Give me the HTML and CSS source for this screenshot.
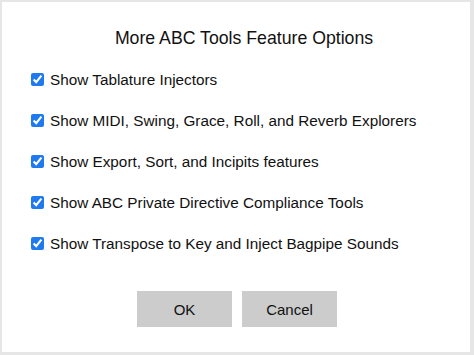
FILE: index.html
```html
<!DOCTYPE html>
<html>
<head>
<meta charset="utf-8">
<link rel="stylesheet" href="styles.css">
</head>
<body>
<div class="dialog">
  <div class="title">More ABC Tools Feature Options</div>
  <div class="options">
    <label class="row"><input type="checkbox" checked><span>Show Tablature Injectors</span></label>
    <label class="row"><input type="checkbox" checked><span>Show MIDI, Swing, Grace, Roll, and Reverb Explorers</span></label>
    <label class="row"><input type="checkbox" checked><span>Show Export, Sort, and Incipits features</span></label>
    <label class="row"><input type="checkbox" checked><span>Show ABC Private Directive Compliance Tools</span></label>
    <label class="row"><input type="checkbox" checked><span>Show Transpose to Key and Inject Bagpipe Sounds</span></label>
  </div>
  <div class="buttons">
    <button class="btn">OK</button>
    <button class="btn">Cancel</button>
  </div>
</div>
</body>
</html>
```
FILE: styles.css
```css
html, body {
  margin: 0;
  padding: 0;
}
body {
  background: #e6e6e6;
  width: 474px;
  height: 355px;
  padding: 2px 4px 3px 2px;
  box-sizing: border-box;
  font-family: "Liberation Sans", Arial, sans-serif;
  color: #111;
}
.dialog {
  background: #fff;
  height: 350px;
  box-sizing: border-box;
  padding-top: 25px;
}
.title {
  font-size: 17.7px;
  line-height: 22px;
  text-align: center;
  padding-left: 16px;
}
.options {
  margin-top: 10px;
  padding-left: 29px;
}
.row {
  display: flex;
  align-items: center;
  height: 41px;
  font-size: 15.3px;
  gap: 6px;
}
.row input {
  margin: 0;
  width: 13px;
  height: 13px;
  accent-color: #1f7af0;
}
.buttons {
  display: flex;
  justify-content: center;
  gap: 10px;
  margin-top: 27px;
  padding-left: 2px;
}
.btn {
  width: 95px;
  height: 36px;
  border: none;
  background: #cccccc;
  font-family: "Liberation Sans", Arial, sans-serif;
  font-size: 15px;
  color: #111;
  padding: 0;
}
```
